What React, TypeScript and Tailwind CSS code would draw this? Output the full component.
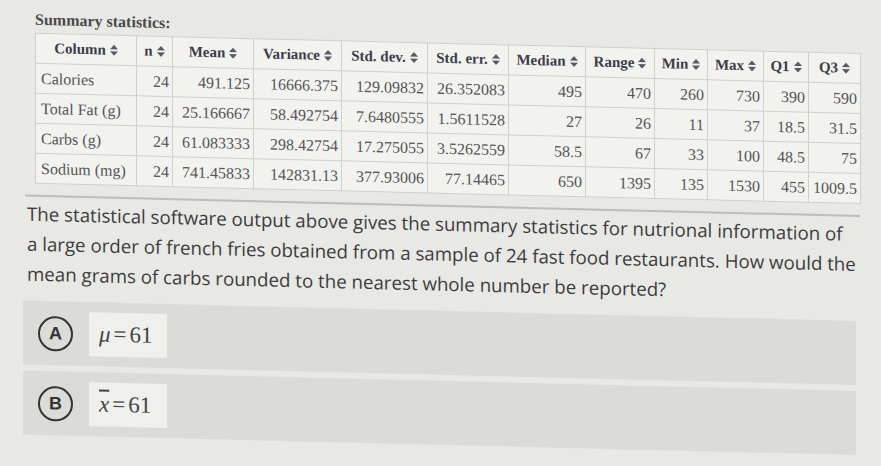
import React from "react";

const cols = [
  { label: "Column", w: 101 },
  { label: "n", w: 36 },
  { label: "Mean", w: 81 },
  { label: "Variance", w: 88 },
  { label: "Std. dev.", w: 86 },
  { label: "Std. err.", w: 81 },
  { label: "Median", w: 77 },
  { label: "Range", w: 69 },
  { label: "Min", w: 53 },
  { label: "Max", w: 56 },
  { label: "Q1", w: 45 },
  { label: "Q3", w: 52 },
];

const rows = [
  ["Calories", "24", "491.125", "16666.375", "129.09832", "26.352083", "495", "470", "260", "730", "390", "590"],
  ["Total Fat (g)", "24", "25.166667", "58.492754", "7.6480555", "1.5611528", "27", "26", "11", "37", "18.5", "31.5"],
  ["Carbs (g)", "24", "61.083333", "298.42754", "17.275055", "3.5262559", "58.5", "67", "33", "100", "48.5", "75"],
  ["Sodium (mg)", "24", "741.45833", "142831.13", "377.93006", "77.14465", "650", "1395", "135", "1530", "455", "1009.5"],
];

function SortIcon() {
  return (
    <svg width="8" height="11" viewBox="0 0 8 11" className="inline-block ml-1 align-[-1px]">
      <polygon points="4,0 8,4.5 0,4.5" fill="#5a5a66" />
      <polygon points="0,6.5 8,6.5 4,11" fill="#5a5a66" />
    </svg>
  );
}

function Choice({ letter, children }: { letter: string; children: React.ReactNode }) {
  return (
    <div className="flex items-center h-[64px] w-[833px] bg-[#dbdbd7] pl-[15px]">
      <div className="flex items-center justify-center w-[35px] h-[35px] rounded-full border-2 border-[#333] font-['Liberation_Sans',sans-serif] font-bold text-[18px] text-[#333]">
        {letter}
      </div>
      <div className="ml-[16px] flex items-center h-[44px] w-[78px] bg-[#efefec] pl-[10px] font-['Liberation_Serif',serif] text-[23px] text-[#444]">
        {children}
      </div>
    </div>
  );
}

export default function App() {
  return (
    <div className="w-[881px] h-[466px] overflow-hidden bg-[#e8e8e4]">
      <div className="skew-y-[1.4deg] origin-top-left">
        <div className="pl-[35px] pt-[10px] font-['Liberation_Serif',serif] font-bold text-[16px] leading-[18px] text-[#4a4a4a]">
          Summary statistics:
        </div>
        <table className="ml-[35px] mt-[4px] border-collapse table-fixed w-[825px] bg-[#f2f2ef] font-['Liberation_Serif',serif] text-[#555]">
          <colgroup>
            {cols.map((c) => (
              <col key={c.label} style={{ width: c.w }} />
            ))}
          </colgroup>
          <thead>
            <tr className="h-[30px]">
              {cols.map((c) => (
                <th key={c.label} className="border border-[#cfcfcb] text-center font-bold text-[15px] text-[#3d3d4a] whitespace-nowrap px-0">
                  {c.label}
                  <SortIcon />
                </th>
              ))}
            </tr>
          </thead>
          <tbody>
            {rows.map((r) => (
              <tr key={r[0]} className="h-[30px]">
                {r.map((v, i) => (
                  <td
                    key={i}
                    className={
                      i === 0
                        ? "border border-[#cfcfcb] text-left pl-[5px] text-[16px] whitespace-nowrap"
                        : "border border-[#cfcfcb] text-right pr-[3px] text-[16px] whitespace-nowrap"
                    }
                  >
                    {v}
                  </td>
                ))}
              </tr>
            ))}
          </tbody>
        </table>
        <div className="ml-[25px] mt-[11px] w-[835px] h-[2px] bg-[#bdbdb9]" />
        <div className="pl-[27px] mt-[2px] font-['Open_Sans',sans-serif] text-[18.7px] leading-[30px] text-[#3c3c3c]">
          <div className="whitespace-nowrap">
            The statistical software output above gives the summary statistics for nutrional information of
          </div>
          <div className="whitespace-nowrap">
            a large order of french fries obtained from a sample of 24 fast food restaurants. How would the
          </div>
          <div className="whitespace-nowrap">mean grams of carbs rounded to the nearest whole number be reported?</div>
        </div>
        <div className="pl-[23px] mt-[12px] flex flex-col gap-[6px]">
          <Choice letter="A">
            <span className="italic">μ</span>
            <span className="ml-[3px]">=</span>
            <span className="ml-[3px]">61</span>
          </Choice>
          <Choice letter="B">
            <span className="italic overline">x</span>
            <span className="ml-[3px]">=</span>
            <span className="ml-[3px]">61</span>
          </Choice>
        </div>
      </div>
    </div>
  );
}
